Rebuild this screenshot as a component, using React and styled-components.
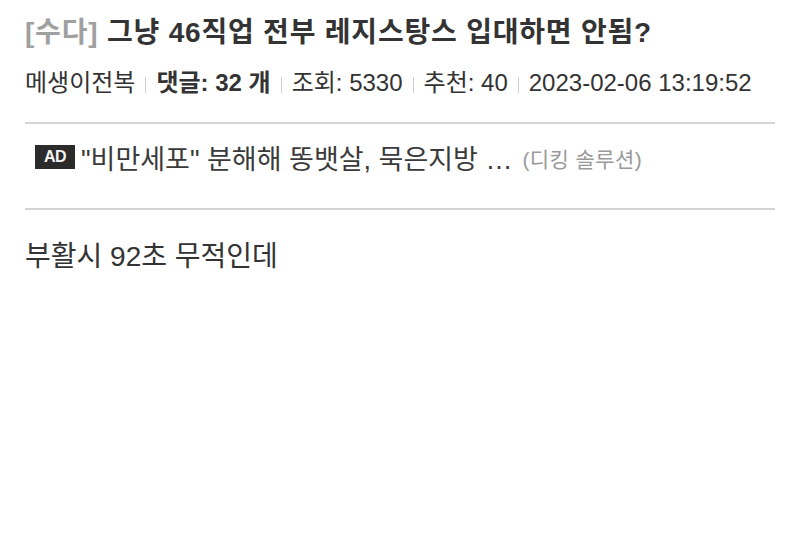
import React from 'react'
import styled, { createGlobalStyle } from 'styled-components'

const GlobalStyle = createGlobalStyle`
  body {
    margin: 0;
    background: #fff;
    font-family: "Liberation Sans", "Noto Sans CJK KR", sans-serif;
    color: #333;
  }
`

const Page = styled.div`
  padding: 13px 25px 0;
`

const Title = styled.h1`
  margin: 0;
  font-size: 28px;
  font-weight: 700;
  line-height: 40px;
  letter-spacing: 0.8px;
  color: #333;
`

const Category = styled.span`
  color: #a0a0a0;
`

const Meta = styled.div`
  display: flex;
  align-items: center;
  margin-top: 15px;
  font-size: 24px;
  line-height: 30px;
  color: #333;
`

const MetaItem = styled.span`
  font-weight: ${props => (props.bold ? 700 : 400)};
`

const Divider = styled.span`
  width: 1px;
  height: 16px;
  margin: 4px 10px 0;
  background: #cfcfcf;
`

const AdRow = styled.div`
  display: flex;
  align-items: center;
  gap: 6px;
  padding: 19px 10px 31px;
  margin-top: 24px;
  border-top: 2px solid #d4d4d4;
  border-bottom: 2px solid #d4d4d4;
  font-size: 27px;
  line-height: 34px;
  color: #3a3a3a;
`

const AdBadge = styled.span`
  display: inline-flex;
  align-items: center;
  justify-content: center;
  flex: none;
  width: 40px;
  height: 24px;
  background: #2b2b2b;
  color: #f4f4f4;
  font-size: 16px;
  font-weight: 700;
  letter-spacing: -0.5px;
  margin-top: -6px;
`

const Sponsor = styled.span`
  font-size: 21px;
  letter-spacing: 0.4px;
  color: #999;
  margin-left: 4px;
`

const Body = styled.p`
  margin: 27px 0 0;
  font-size: 28px;
  line-height: 40px;
  color: #333;
`

export default function App() {
  return (
    <Page>
      <GlobalStyle />
      <Title>
        <Category>[수다]</Category> 그냥 46직업 전부 레지스탕스 입대하면 안됨?
      </Title>
      <Meta>
        <MetaItem>메생이전복</MetaItem>
        <Divider />
        <MetaItem bold>댓글: 32 개</MetaItem>
        <Divider />
        <MetaItem>조회: 5330</MetaItem>
        <Divider />
        <MetaItem>추천: 40</MetaItem>
        <Divider />
        <MetaItem>2023-02-06 13:19:52</MetaItem>
      </Meta>
      <AdRow>
        <AdBadge>AD</AdBadge>
        <span>"비만세포" 분해해 똥뱃살, 묵은지방 …</span>
        <Sponsor>(디킹 솔루션)</Sponsor>
      </AdRow>
      <Body>부활시 92초 무적인데</Body>
    </Page>
  )
}
